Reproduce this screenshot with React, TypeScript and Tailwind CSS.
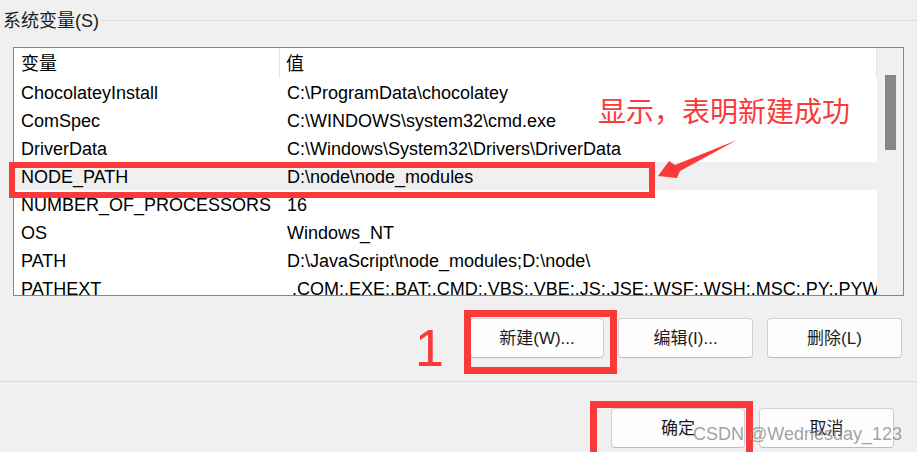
import React from "react"

const rows = [
  { name: "ChocolateyInstall", value: "C:\\ProgramData\\chocolatey" },
  { name: "ComSpec", value: "C:\\WINDOWS\\system32\\cmd.exe" },
  { name: "DriverData", value: "C:\\Windows\\System32\\Drivers\\DriverData" },
  { name: "NODE_PATH", value: "D:\\node\\node_modules", selected: true },
  { name: "NUMBER_OF_PROCESSORS", value: "16" },
  { name: "OS", value: "Windows_NT" },
  { name: "PATH", value: "D:\\JavaScript\\node_modules;D:\\node\\" },
  { name: "PATHEXT", value: " .COM;.EXE;.BAT;.CMD;.VBS;.VBE;.JS;.JSE;.WSF;.WSH;.MSC;.PY;.PYW" },
]

const font = { fontFamily: '"Liberation Sans", "Noto Sans CJK SC", sans-serif' }

function WinButton({ label, className = "" }: { label: string; className?: string }) {
  return (
    <button
      className={`flex h-[40px] items-center justify-center rounded-[4px] border border-[#d0d0d0] border-b-[#bcbcbc] bg-[#fdfdfd] pt-[2px] text-[17px] text-[#1b1b1b] ${className}`}
    >
      {label}
    </button>
  )
}

export default function App() {
  return (
    <div className="relative h-[452px] w-[917px] overflow-hidden bg-[#f0f0f0] text-black" style={font}>
      {/* group header */}
      <div className="flex h-[40px] items-center pl-[3px]">
        <span className="pt-[2px] text-[18px] leading-none text-[#1b1b1b]">系统变量(S)</span>
        <div className="ml-[2px] h-px flex-1 bg-[#dcdcdc]" />
      </div>

      {/* list view */}
      <div className="ml-[13px] mt-[7px] flex h-[249px] w-[891px] border border-[#828790] bg-white">
        <div className="flex-1 overflow-hidden">
          <div className="flex h-[30px] items-center border-r border-[#e3e3e3] text-[18px]">
            <div className="flex h-full w-[266px] items-center border-r border-[#e5e5e5] pl-[7px] pt-[3px]">变量</div>
            <div className="pl-[6px] pt-[3px]">值</div>
          </div>
          {rows.map((r) => (
            <div
              key={r.name}
              className={`flex h-[28px] items-center whitespace-pre pt-[3px] text-[18px] ${r.selected ? "bg-[#f0f0f0]" : ""}`}
            >
              <div className="w-[266px] shrink-0 pl-[7px]">{r.name}</div>
              <div className="pl-[7px]">{r.value}</div>
            </div>
          ))}
        </div>
        <div className="flex w-[26px] flex-col items-center bg-[#f0f0f0] pt-[27px]">
          <div className="h-[75px] w-[11px] bg-[#878787]" />
        </div>
      </div>

      {/* action buttons */}
      <div className="mt-[22px] flex justify-end gap-[14px] pr-[15px]">
        <WinButton label="新建(W)..." className="w-[134px]" />
        <WinButton label="编辑(I)..." className="w-[135px]" />
        <WinButton label="删除(L)" className="w-[135px]" />
      </div>

      <div className="mt-[23px] h-px bg-[#dcdcdc]" />

      <div className="mt-[26px] flex justify-end gap-[14px] pr-[23px]">
        <WinButton label="确定" className="w-[134px]" />
        <WinButton label="取消" className="w-[135px]" />
      </div>

      {/* annotations */}
      <div className="absolute left-[9px] top-[162px] h-[36px] w-[646px] border-[6px] border-[#fa3a3a]" />
      <div className="absolute left-[464px] top-[310px] h-[64px] w-[153px] border-[7px] border-[#fa3a3a]" />
      <div className="absolute left-[590px] top-[401px] h-[62px] w-[163px] border-[7px] border-[#fa3a3a]" />

      <div
        className="absolute left-[598px] top-[96px] text-[28px] leading-[28px] text-[#fa3a3a]"
        style={{ fontFamily: '"Noto Sans CJK SC", sans-serif' }}
      >
        显示，表明新建成功
      </div>

      <svg className="absolute left-0 top-0" width="917" height="452" viewBox="0 0 917 452">
        <polygon points="658,176 669,161 675,165 737,140 680,171 677,178" fill="#fa3a3a" />
      </svg>

      <div className="absolute left-[415px] top-[323px] text-[52px] leading-[50px] text-[#fa3a3a]">1</div>

      <div className="absolute left-[693px] top-[423px] text-[18px] leading-[22px] text-[#8a8a8a]/80">
        CSDN @Wednesday_123
      </div>
    </div>
  )
}
